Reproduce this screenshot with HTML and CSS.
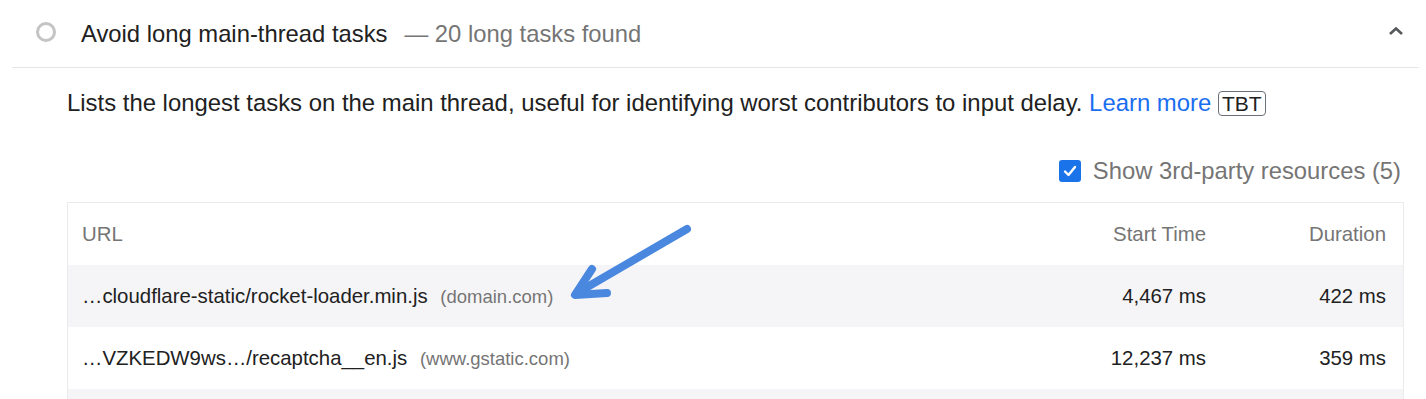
FILE: index.html
```html
<!DOCTYPE html>
<html>
<head>
<meta charset="utf-8">
<link rel="stylesheet" href="styles.css">
</head>
<body>
<div class="audit">
  <div class="audit-header">
    <span class="status-icon"></span>
    <span class="title">Avoid long main-thread tasks</span>
    <span class="display-value">— 20 long tasks found</span>
    <span class="chevron">
      <svg width="16" height="10" viewBox="0 0 16 10"><path d="M2 8 L8 2.5 L14 8" fill="none" stroke="#55585c" stroke-width="2.6"/></svg>
    </span>
  </div>
  <div class="audit-body">
    <p class="description">Lists the longest tasks on the main thread, useful for identifying worst contributors to input delay. <a class="link">Learn more</a> <span class="badge">TBT</span></p>
    <div class="filter">
      <span class="checkbox">
        <svg width="14" height="12" viewBox="0 0 14 12"><path d="M2 6.5 L5.5 10 L12 2" fill="none" stroke="#fff" stroke-width="2.4" stroke-linecap="round" stroke-linejoin="round"/></svg>
      </span>
      <span class="filter-label">Show 3rd-party resources (5)</span>
    </div>
    <div class="table">
      <div class="row head">
        <span class="cell url">URL</span>
        <span class="cell num">Start Time</span>
        <span class="cell num dur">Duration</span>
      </div>
      <div class="row shaded">
        <span class="cell url">…cloudflare-static/rocket-loader.min.js <span class="origin">(domain.com)</span></span>
        <span class="cell num">4,467 ms</span>
        <span class="cell num dur">422 ms</span>
      </div>
      <div class="row">
        <span class="cell url">…VZKEDW9ws…/recaptcha__en.js <span class="origin">(www.gstatic.com)</span></span>
        <span class="cell num">12,237 ms</span>
        <span class="cell num dur">359 ms</span>
      </div>
      <div class="row shaded"></div>
    </div>
    <svg class="annotation" width="140" height="95" viewBox="0 0 140 95">
      <path d="M128 15 L18 79" fill="none" stroke="#4a88e0" stroke-width="8" stroke-linecap="round"/>
      <path d="M33 55 L16 81 L48 79" fill="none" stroke="#4a88e0" stroke-width="8" stroke-linecap="round" stroke-linejoin="round"/>
    </svg>
  </div>
</div>
</body>
</html>
```

FILE: styles.css
```css
html, body {
  margin: 0;
  padding: 0;
  background: #fff;
  font-family: "Liberation Sans", Arial, sans-serif;
  color: #212121;
}

.audit {
  margin-left: 12px;
  width: 1407px;
  height: 399px;
  overflow: hidden;
}

.audit-header {
  display: flex;
  align-items: center;
  border-bottom: 1px solid #e6e6e6;
  padding-left: 24px;
  box-sizing: border-box;
  height: 68px;
}

.status-icon {
  width: 14px;
  height: 14px;
  border: 3px solid #c4c4c4;
  border-radius: 50%;
  margin-right: 25px;
  margin-top: -3px;
}

.title {
  font-size: 23.8px;
  color: #212121;
}

.display-value {
  font-size: 23.8px;
  color: #757575;
  margin-left: 17px;
}

.chevron {
  margin-left: auto;
  margin-right: 15px;
  margin-top: -6px;
  display: flex;
}

.audit-body {
  position: relative;
  padding-left: 55px;
  padding-right: 15px;
}

.description {
  margin: 0;
  padding-top: 21px;
  font-size: 23.9px;
  line-height: 28px;
  color: #212121;
}

.link {
  color: #1a6ef0;
}

.badge {
  display: inline-block;
  border: 1px solid #6b7078;
  border-radius: 4px;
  padding: 0 3px;
  line-height: 23px;
  font-size: 21px;
  color: #212121;
}

.filter {
  display: flex;
  justify-content: flex-end;
  align-items: center;
  margin-top: 39px;
  height: 30px;
  padding-right: 3px;
}

.checkbox {
  width: 22px;
  height: 22px;
  background: #1a73e8;
  border-radius: 3px;
  display: flex;
  align-items: center;
  justify-content: center;
  margin-right: 12px;
}

.filter-label {
  font-size: 23.8px;
  color: #757575;
}

.table {
  margin-top: 16px;
  border: 1px solid #ebebeb;
  border-bottom: none;
}

.row {
  display: flex;
  align-items: center;
  height: 62px;
}

.row.shaded {
  background: #f5f5f7;
}

.cell {
  font-size: 20.4px;
  color: #212121;
}

.cell.url {
  flex: 1;
  padding-left: 14px;
}

.cell.num {
  width: 180px;
  text-align: right;
}

.cell.dur {
  padding-right: 17px;
}

.head .cell {
  color: #757575;
}

.origin {
  font-size: 18.5px;
  color: #757575;
  margin-left: 7px;
}

.annotation {
  position: absolute;
  left: 547px;
  top: 146px;
}
```
